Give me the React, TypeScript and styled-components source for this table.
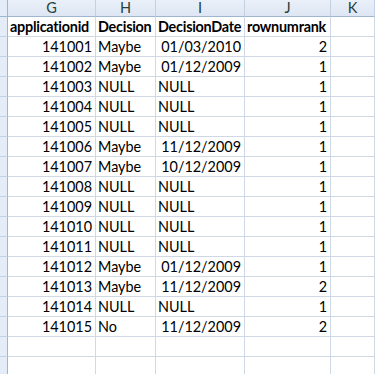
import React from "react";
import styled, { createGlobalStyle } from "styled-components";

const GlobalStyle = createGlobalStyle`
  html, body {
    margin: 0;
    padding: 0;
    background: #ffffff;
    overflow: hidden;
  }
`;

type Row = [string, string, string, string];

const rows: Row[] = [
  ["141001", "Maybe", "01/03/2010", "2"],
  ["141002", "Maybe", "01/12/2009", "1"],
  ["141003", "NULL", "NULL", "1"],
  ["141004", "NULL", "NULL", "1"],
  ["141005", "NULL", "NULL", "1"],
  ["141006", "Maybe", "11/12/2009", "1"],
  ["141007", "Maybe", "10/12/2009", "1"],
  ["141008", "NULL", "NULL", "1"],
  ["141009", "NULL", "NULL", "1"],
  ["141010", "NULL", "NULL", "1"],
  ["141011", "NULL", "NULL", "1"],
  ["141012", "Maybe", "01/12/2009", "1"],
  ["141013", "Maybe", "11/12/2009", "2"],
  ["141014", "NULL", "NULL", "1"],
  ["141015", "No", "11/12/2009", "2"],
];

const columns = ["G", "H", "I", "J", "K"];

function App() {
  return (
    <>
      <GlobalStyle />
      <Sheet>
        <Corner />
        {columns.map((c) => (
          <ColHeader key={c}>{c}</ColHeader>
        ))}

        <RowStub />
        <Cell bold>applicationid</Cell>
        <Cell bold>Decision</Cell>
        <Cell bold>DecisionDate</Cell>
        <Cell bold>rownumrank</Cell>
        <Cell />

        {rows.map((r) => (
          <React.Fragment key={r[0]}>
            <RowStub />
            <Cell right>{r[0]}</Cell>
            <Cell>{r[1]}</Cell>
            <Cell right={r[2] !== "NULL"}>{r[2]}</Cell>
            <Cell right>{r[3]}</Cell>
            <Cell />
          </React.Fragment>
        ))}

        {[0, 1].map((i) => (
          <React.Fragment key={"empty" + i}>
            <RowStub />
            <Cell />
            <Cell />
            <Cell />
            <Cell />
            <Cell />
          </React.Fragment>
        ))}
      </Sheet>
    </>
  );
}

const Sheet = styled.div`
  display: grid;
  grid-template-columns: 8px 88px 60px 89px 86px 1fr;
  grid-template-rows: 17px;
  grid-auto-rows: 20px;
  width: 375px;
  font-family: Lato, "Liberation Sans", sans-serif;
  font-size: 14.4px;
  color: #000000;
`;

const Corner = styled.div`
  box-sizing: border-box;
  background: #e4ecf7;
  border-right: 1px solid #9eb6ce;
  border-bottom: 1px solid #9eb6ce;
`;

const ColHeader = styled.div`
  box-sizing: border-box;
  display: flex;
  align-items: center;
  justify-content: center;
  background: linear-gradient(#eaf0f9, #dde6f3);
  border-right: 1px solid #c3d1e3;
  border-bottom: 1px solid #9eb6ce;
  color: #27413e;
  font-size: 14.5px;
  line-height: 16px;
`;

const RowStub = styled.div`
  box-sizing: border-box;
  background: #e4ecf7;
  border-right: 1px solid #9eb6ce;
  border-bottom: 1px solid #c5d2e3;
`;

const Cell = styled.div<{ right?: boolean; bold?: boolean }>`
  box-sizing: border-box;
  display: flex;
  align-items: center;
  justify-content: ${(p) => (p.right ? "flex-end" : "flex-start")};
  padding: 0 3px 0 2px;
  border-right: 1px solid #d0d7e5;
  border-bottom: 1px solid #d0d7e5;
  font-weight: ${(p) => (p.bold ? 700 : 400)};
  letter-spacing: ${(p) => (p.bold ? "-0.25px" : "0")};
  white-space: nowrap;
  overflow: hidden;
`;

export default App;
